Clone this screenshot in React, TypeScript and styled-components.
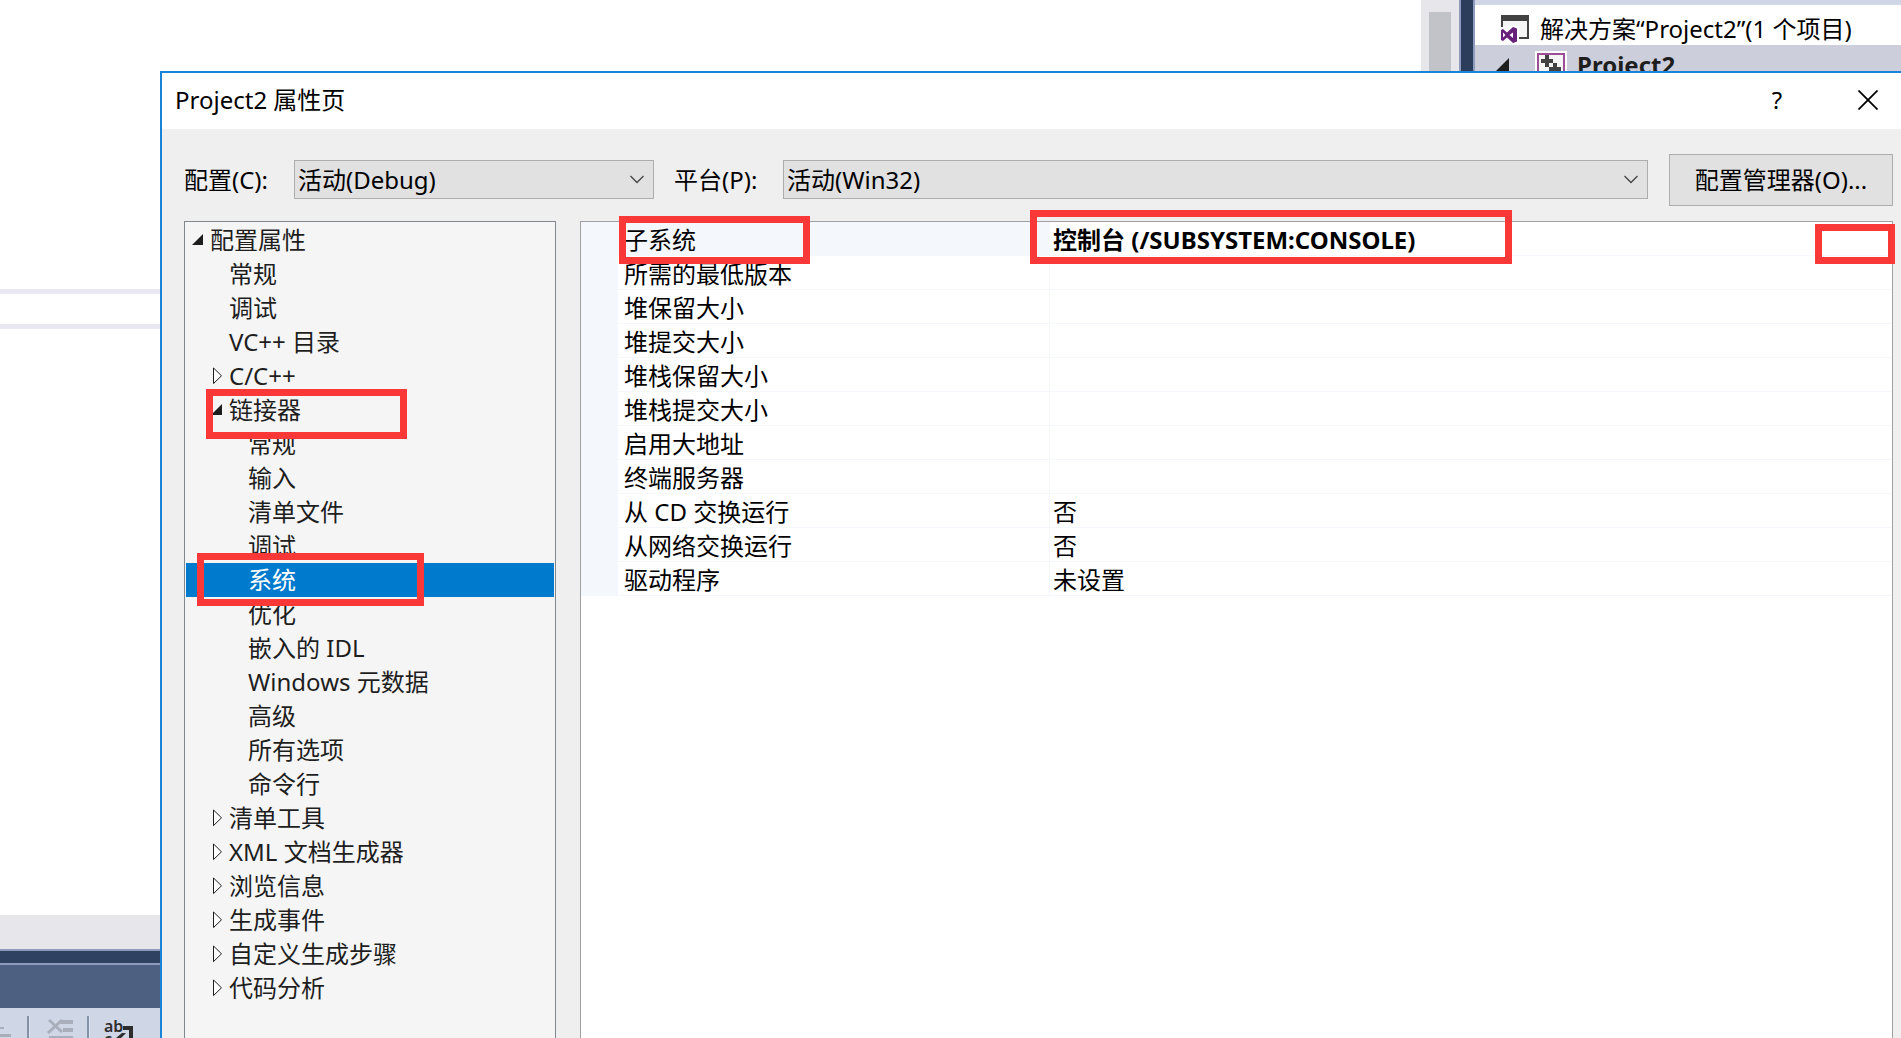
import React from "react";
import styled, { createGlobalStyle, css } from "styled-components";

const GlobalStyle = createGlobalStyle`
  *, *::before, *::after { box-sizing: border-box; }
  body { margin: 0; background: #fff; }
  body, button, select, table {
    font-family: "Noto Sans", "Noto Sans CJK SC", sans-serif;
    font-size: 24px;
    line-height: 34px;
    color: #000;
  }
`;

/* ---------- IDE behind the dialog ---------- */

const Desktop = styled.div`
  position: relative;
  display: flex;
  height: 100vh;
  overflow: hidden;
  background: #fff;
`;

const EditorColumn = styled.div`
  flex: 1;
  min-width: 0;
  display: flex;
  flex-direction: column;
`;

const EditorRow = styled.div`
  flex: 1;
  display: flex;
  min-height: 0;
`;

const Editor = styled.div`
  flex: 1;
  padding-top: 289px;
`;

const CurrentLine = styled.div`
  height: 40px;
  border: solid #e9e8f2;
  border-width: 5px 0;
`;

const ScrollTrack = styled.div`
  width: 38px;
  padding: 12px 8px 0;
  background: #e7e6eb;
`;

const ScrollThumb = styled.div`
  height: 600px;
  background: #c2c3c9;
`;

const HorizontalTrack = styled.div`
  height: 34px;
  background: #e7e6ea;
`;

const HorizontalSplitter = styled.div`
  height: 16px;
  background: #2f4262;
  border: solid #8e9bbc;
  border-width: 2px 0;
`;

const OutputTitle = styled.div`
  height: 43px;
  background: #4d6082;
`;

const OutputToolbar = styled.div`
  height: 30px;
  display: flex;
  background: #cfd6e5;
`;

const VerticalSplitter = styled.div`
  width: 16px;
  background: #2c3d5b;
  border: solid #8e9bbc;
  border-width: 0 2px;
`;

const Explorer = styled.aside`
  width: 426px;
  border-top: 5px solid #cfd6e5;
`;

const SolutionRow = styled.div`
  display: flex;
  align-items: center;
  gap: 11px;
  height: 40px;
  padding: 8px 0 0 26px;
  white-space: nowrap;
`;

const ProjectRow = styled.div`
  display: flex;
  align-items: center;
  height: 40px;
  padding-left: 18px;
  background: #cccedb;
  color: #1e1e1e;
  font-weight: 700;
  white-space: nowrap;
  > svg:first-child { margin-right: 26px; }
  > svg:nth-child(2) { margin: 4px 10px 0 0; }
`;

/* ---------- Property pages dialog ---------- */

const Dialog = styled.section`
  position: absolute;
  left: 160px;
  right: 0;
  top: 71px;
  bottom: 0;
  display: flex;
  flex-direction: column;
  background: #efefef;
  border: solid #1883d7;
  border-width: 2px 0 0 2px;
`;

const TitleBar = styled.header`
  display: flex;
  align-items: center;
  height: 56px;
  padding: 0 12px 2px 13px;
  background: #fff;
`;

const Title = styled.h1`
  flex: 1;
  margin: 0;
  font-size: 24px;
  font-weight: 400;
`;

const CaptionButton = styled.button`
  display: flex;
  align-items: center;
  justify-content: center;
  width: 42px;
  height: 54px;
  margin-left: 49px;
  padding: 0;
  border: 0;
  background: none;
`;

const DialogBody = styled.div`
  flex: 1;
  min-height: 0;
  display: flex;
  flex-direction: column;
  gap: 15px;
  padding: 25px 8px 0 22px;
`;

const ConfigBar = styled.div`
  display: grid;
  grid-template-columns: 110px 360px 20px 109px 1fr 21px 224px;
  align-items: center;
  height: 52px;
  label { white-space: nowrap; }
`;

const Gap = styled.span``;

const SelectBox = styled.div`
  display: grid;
  align-items: center;
  margin-bottom: 1px;
  > * { grid-area: 1 / 1; }
  > svg { justify-self: end; margin-right: 10px; pointer-events: none; }
`;

const Select = styled.select`
  appearance: none;
  width: 100%;
  height: 39px;
  padding: 0 30px 0 3px;
  border: 1px solid #adadad;
  border-radius: 0;
  background: #e1e1e1;
`;

const PushButton = styled.button`
  height: 52px;
  padding: 0;
  border: 1px solid #adadad;
  background: #e1e1e1;
  white-space: nowrap;
`;

const Panes = styled.div`
  flex: 1;
  min-height: 0;
  display: grid;
  grid-template-columns: 372px 1fr;
  gap: 24px;
`;

const Tree = styled.ul`
  margin: 0;
  padding: 1px;
  list-style: none;
  background: #f5f5f5;
  border: solid #828790;
  border-width: 1px 1px 0;
  color: #1e1e1e;
`;

const TreeItem = styled.li<{ $level: number; $selected?: boolean }>`
  position: relative;
  display: flex;
  align-items: center;
  height: 34px;
  padding-left: ${(p) => 5 + p.$level * 19}px;
  white-space: nowrap;
  ${(p) =>
    p.$selected &&
    css`
      background: #007acc;
      color: #fff;
    `}
  > svg { flex: none; margin-right: 6px; }
`;

const Grid = styled.div`
  background: #fff;
  border: solid #a0a0a0;
  border-width: 1px 1px 0;
`;

const Table = styled.table`
  width: 100%;
  border-collapse: separate;
  border-spacing: 0;
  table-layout: fixed;
  td, th {
    position: relative;
    height: 34px;
    padding: 2px 0 0 3px;
    border-bottom: 1px solid #f4f7fc;
    font-weight: 400;
    line-height: 31px;
    text-align: left;
    white-space: nowrap;
  }
  th { padding-left: 6px; border-right: 1px solid #f4f7fc; }
`;

const Gutter = styled.col`
  width: 37px;
  background: #f4f7fc;
`;

const NameColumn = styled.col`
  width: 432px;
`;

const PropertyRow = styled.tr<{ $active?: boolean }>`
  ${(p) =>
    p.$active &&
    css`
      th { background: #f4f7fc; }
      && td { font-weight: 700; }
    `}
`;

/* Red frame drawn over the item it calls out. */
const Callout = styled.span<{ $left?: number; $right?: number; $top: number; $w: number; $h: number }>`
  position: absolute;
  z-index: 1;
  top: ${(p) => p.$top}px;
  ${(p) => (p.$right !== undefined ? `right: ${p.$right}px;` : `left: ${p.$left}px;`)}
  width: ${(p) => p.$w}px;
  height: ${(p) => p.$h}px;
  border: 7px solid #fb3838;
  pointer-events: none;
`;

/* ---------- Icons ---------- */

const Expander = ({ state }: { state?: "open" | "closed" }) => (
  <svg width="13" height="18" viewBox="0 0 13 18" aria-hidden="true">
    {state === "open" && <path d="M12 3v11H1z" fill="#1e1e1e" />}
    {state === "closed" && <path d="M3.5 1v15.600L11.500 8.800z" fill="#fff" stroke="#1e1e1e" />}
  </svg>
);

const ProjectArrow = () => (
  <svg width="16" height="16" viewBox="0 0 16 16" aria-hidden="true">
    <path d="M16 1v15H1z" fill="#1e1e1e" />
  </svg>
);

const Chevron = () => (
  <svg width="14" height="9" viewBox="0 0 14 9" fill="none" stroke="#444" strokeWidth="1.300" aria-hidden="true">
    <path d="M.5 1L7 7.500 13.500 1" />
  </svg>
);

const SolutionIcon = () => (
  <svg width="28" height="28" viewBox="0 0 28 28" aria-hidden="true">
    <path d="M0 0h28v24H18v-2h8V6H2v6H0z" fill="#424242" />
    <path d="M2 6h24v16H18V11H2z" fill="#f5f5f5" />
    <path
      d="M12 12l4 1.500v13L12 28l-6-5.500L2 26l-2-1V15l2-1 4 3.500zM12 17.500L8.500 20l3.500 3zM2 17.500v5L4.500 20z"
      fill="#68217a"
      fillRule="evenodd"
    />
  </svg>
);

const ProjectIcon = () => (
  <svg width="32" height="32" viewBox="0 0 32 32" aria-hidden="true">
    <path d="M0 0h32v32H0z" fill="#fff" />
    <path d="M3 3h26v26H3z" fill="#f5f5f5" stroke="#9b4f96" strokeWidth="2" />
    <path d="M10 4h4v4h4v4h-4v4h-4v-4H6V8h4zM18 12h4v4h4v4h-4v4h-4v-4h-4v-4h4z" fill="#424242" />
  </svg>
);

const ToolbarIcons = () => (
  <svg width="160" height="30" viewBox="0 0 160 30" aria-hidden="true">
    <path d="M0 19h4v2H0zM0 26h11v3H0z" fill="#a9aebb" />
    <path d="M27 8h2v22h-2zM87 8h2v22h-2z" fill="#8591a8" />
    <path d="M29 8h1v22h-1zM89 8h1v22h-1z" fill="#dce2ee" />
    <path d="M62 12h11v4H60zM63 20h10v4H63zM49 28h24v2H49z" fill="#a9aebb" />
    <path d="M49 12l13 12M62 12L48 25" stroke="#a9aebb" strokeWidth="3" />
    <g fill="#2d2d2d" fontSize="16" fontWeight="600">
      <text x="104" y="24">ab</text>
      <text x="104" y="37">c</text>
    </g>
    <path d="M123 18h10v12h-4v-8h-6zM116 30l6-5h4l-5 5z" fill="#2d2d2d" />
  </svg>
);

/* ---------- Data ---------- */

type Node = { text: string; level: number; state?: "open" | "closed"; selected?: boolean; mark?: React.ReactNode };

const nodes: Node[] = [
  { text: "配置属性", level: 0, state: "open" },
  { text: "常规", level: 1 },
  { text: "调试", level: 1 },
  { text: "VC++ 目录", level: 1 },
  { text: "C/C++", level: 1, state: "closed" },
  { text: "链接器", level: 1, state: "open", mark: <Callout $left={20} $top={-4} $w={201} $h={50} /> },
  { text: "常规", level: 2 },
  { text: "输入", level: 2 },
  { text: "清单文件", level: 2 },
  { text: "调试", level: 2 },
  { text: "系统", level: 2, selected: true, mark: <Callout $left={11} $top={-10} $w={227} $h={53} /> },
  { text: "优化", level: 2 },
  { text: "嵌入的 IDL", level: 2 },
  { text: "Windows 元数据", level: 2 },
  { text: "高级", level: 2 },
  { text: "所有选项", level: 2 },
  { text: "命令行", level: 2 },
  { text: "清单工具", level: 1, state: "closed" },
  { text: "XML 文档生成器", level: 1, state: "closed" },
  { text: "浏览信息", level: 1, state: "closed" },
  { text: "生成事件", level: 1, state: "closed" },
  { text: "自定义生成步骤", level: 1, state: "closed" },
  { text: "代码分析", level: 1, state: "closed" },
];

const properties: [string, string][] = [
  ["子系统", "控制台 (/SUBSYSTEM:CONSOLE)"],
  ["所需的最低版本", ""],
  ["堆保留大小", ""],
  ["堆提交大小", ""],
  ["堆栈保留大小", ""],
  ["堆栈提交大小", ""],
  ["启用大地址", ""],
  ["终端服务器", ""],
  ["从 CD 交换运行", "否"],
  ["从网络交换运行", "否"],
  ["驱动程序", "未设置"],
];

export default function App() {
  return (
    <>
      <GlobalStyle />
      <Desktop>
        <EditorColumn>
          <EditorRow>
            <Editor>
              <CurrentLine />
            </Editor>
            <ScrollTrack>
              <ScrollThumb />
            </ScrollTrack>
          </EditorRow>
          <HorizontalTrack />
          <HorizontalSplitter />
          <OutputTitle />
          <OutputToolbar>
            <ToolbarIcons />
          </OutputToolbar>
        </EditorColumn>
        <VerticalSplitter />
        <Explorer>
          <SolutionRow>
            <SolutionIcon />
            解决方案“Project2”(1 个项目)
          </SolutionRow>
          <ProjectRow>
            <ProjectArrow />
            <ProjectIcon />
            Project2
          </ProjectRow>
        </Explorer>

        <Dialog role="dialog" aria-labelledby="dialog-title">
          <TitleBar>
            <Title id="dialog-title">Project2 属性页</Title>
            <CaptionButton>?</CaptionButton>
            <CaptionButton aria-label="关闭">
              <svg width="20" height="20" viewBox="0 0 20 20" stroke="#000" strokeWidth="1.800" aria-hidden="true">
                <path d="M.5.5l19 19M19.500.5l-19 19" />
              </svg>
            </CaptionButton>
          </TitleBar>
          <DialogBody>
            <ConfigBar>
              <label htmlFor="config">配置(C):</label>
              <SelectBox>
                <Select id="config">
                  <option>活动(Debug)</option>
                </Select>
                <Chevron />
              </SelectBox>
              <Gap />
              <label htmlFor="platform">平台(P):</label>
              <SelectBox>
                <Select id="platform">
                  <option>活动(Win32)</option>
                </Select>
                <Chevron />
              </SelectBox>
              <Gap />
              <PushButton>配置管理器(O)...</PushButton>
            </ConfigBar>
            <Panes>
              <Tree>
                {nodes.map((n, i) => (
                  <TreeItem key={i} $level={n.level} $selected={n.selected}>
                    <Expander state={n.state} />
                    {n.text}
                    {n.mark}
                  </TreeItem>
                ))}
              </Tree>
              <Grid>
                <Table>
                  <colgroup>
                    <Gutter />
                    <NameColumn />
                    <col />
                  </colgroup>
                  <tbody>
                    {properties.map(([name, value], i) => (
                      <PropertyRow key={name} $active={i === 0}>
                        <td />
                        <th scope="row">
                          {name}
                          {i === 0 && <Callout $left={1} $top={-6} $w={191} $h={48} />}
                        </th>
                        <td>
                          {value}
                          {i === 0 && <Callout $left={-20} $top={-12} $w={482} $h={54} />}
                          {i === 0 && <Callout $right={-3} $top={2} $w={80} $h={40} />}
                        </td>
                      </PropertyRow>
                    ))}
                  </tbody>
                </Table>
              </Grid>
            </Panes>
          </DialogBody>
        </Dialog>
      </Desktop>
    </>
  );
}
